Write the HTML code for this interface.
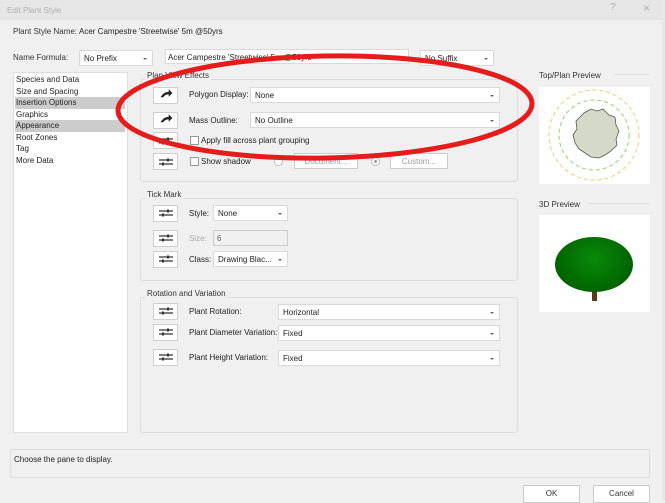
<!DOCTYPE html>
<html><head><style>
*{box-sizing:border-box;margin:0;padding:0}
body{width:665px;height:500px;background:#f0f0f0;font-family:"Liberation Sans",sans-serif;font-size:8px;color:#222;position:relative;overflow:hidden}
.a{position:absolute}
.dd{position:absolute;background:#fff;border:1px solid #d9d9d9;height:16px;padding:3px 4px;font-size:8px;color:#222}
.dd:after{content:"";position:absolute;right:5px;top:7px;border-left:2px solid transparent;border-right:2px solid transparent;border-top:2px solid #666}
.btn{position:absolute;width:25px;height:17px;background:#fff;border:1px solid #cfcfcf}
.grp{position:absolute;border:1px solid #dcdcdc;border-radius:3px}
.gl{position:absolute;background:#f0f0f0;padding:0 2px;font-size:8px;color:#333}
.pb{position:absolute;background:#fff;border:1px solid #ccc;font-size:8px;color:#999;text-align:center;padding-top:3px;height:16px}
</style></head><body>
<div class="a" style="left:0;top:0;width:665px;height:20px;background:#e6e6e6"></div>
<div class="a" style="left:7px;top:6px;color:#b0b0b0;font-size:8px">Edit Plant Style</div>
<div class="a" style="left:610px;top:2px;color:#b0b0b0;font-size:10px">?</div>
<div class="a" style="left:643px;top:1px;color:#b0b0b0;font-size:12px">×</div>
<div class="a" style="left:13px;top:27px;color:#333">Plant Style Name:</div>
<div class="a" style="left:79px;top:27px">Acer Campestre 'Streetwise' 5m @50yrs</div>
<div class="a" style="left:13px;top:53px;color:#333">Name Formula:</div>
<div class="dd" style="left:79px;top:50px;width:74px">No Prefix</div>
<div class="a" style="left:165px;top:49px;width:244px;height:15px;background:#fff;border:1px solid #d9d9d9;padding:3px 2px">Acer Campestre 'Streetwise' 5m @50yrs</div>
<div class="dd" style="left:420px;top:50px;width:74px">No Suffix</div>
<div class="a" style="left:13px;top:72px;width:115px;height:361px;background:#fff;border:1px solid #ddd"></div>
<div class="a" style="left:15px;top:74px;line-height:11.5px;width:110px">
<div style="padding-left:1px">Species and Data</div><div style="padding-left:1px">Size and Spacing</div>
<div style="padding-left:1px;background:#cccccc">Insertion Options</div><div style="padding-left:1px">Graphics</div>
<div style="padding-left:1px;background:#cccccc">Appearance</div><div style="padding-left:1px">Root Zones</div>
<div style="padding-left:1px">Tag</div><div style="padding-left:1px">More Data</div></div>

<div class="grp" style="left:140px;top:79px;width:378px;height:103px"></div>
<div class="gl" style="left:145px;top:71px">Plan View Effects</div>
<div class="btn" style="left:153px;top:87px"></div>
<div class="btn" style="left:153px;top:112px"></div>
<div class="btn" style="left:153px;top:132px"></div>
<div class="btn" style="left:153px;top:153px"></div>
<div class="a" style="left:189px;top:90px">Polygon Display:</div>
<div class="dd" style="left:250px;top:87px;width:250px">None</div>
<div class="a" style="left:189px;top:116px">Mass Outline:</div>
<div class="dd" style="left:250px;top:112px;width:250px">No Outline</div>
<div class="a" style="left:190px;top:136px;width:9px;height:9px;border:1px solid #999;background:#fff"></div>
<div class="a" style="left:201px;top:136px">Apply fill across plant grouping</div>
<div class="a" style="left:190px;top:157px;width:9px;height:9px;border:1px solid #999;background:#fff"></div>
<div class="a" style="left:201px;top:157px">Show shadow</div>
<div class="a" style="left:274px;top:157px;width:9px;height:9px;border:1px solid #bbb;border-radius:50%;background:#fff"></div>
<div class="pb" style="left:294px;top:153px;width:64px">Document...</div>
<div class="a" style="left:371px;top:157px;width:9px;height:9px;border:1px solid #bbb;border-radius:50%;background:#fff"><div style="width:3px;height:3px;background:#999;border-radius:50%;margin:2px"></div></div>
<div class="pb" style="left:390px;top:153px;width:58px">Custom...</div>

<div class="grp" style="left:140px;top:198px;width:378px;height:83px"></div>
<div class="gl" style="left:145px;top:190px">Tick Mark</div>
<div class="btn" style="left:153px;top:205px"></div>
<div class="btn" style="left:153px;top:230px"></div>
<div class="btn" style="left:153px;top:251px"></div>
<div class="a" style="left:189px;top:209px">Style:</div>
<div class="dd" style="left:213px;top:205px;width:75px">None</div>
<div class="a" style="left:189px;top:234px;color:#aaa">Size:</div>
<div class="a" style="left:213px;top:230px;width:75px;height:16px;border:1px solid #ccc;background:#f0f0f0;padding:3px 3px;color:#666">6</div>
<div class="a" style="left:189px;top:255px">Class:</div>
<div class="dd" style="left:213px;top:251px;width:75px">Drawing Blac...</div>

<div class="grp" style="left:140px;top:297px;width:378px;height:136px"></div>
<div class="gl" style="left:145px;top:289px">Rotation and Variation</div>
<div class="btn" style="left:153px;top:303px"></div>
<div class="btn" style="left:153px;top:324px"></div>
<div class="btn" style="left:153px;top:349px"></div>
<div class="a" style="left:189px;top:307px">Plant Rotation:</div>
<div class="dd" style="left:278px;top:304px;width:222px">Horizontal</div>
<div class="a" style="left:189px;top:328px">Plant Diameter Variation:</div>
<div class="dd" style="left:278px;top:325px;width:222px">Fixed</div>
<div class="a" style="left:189px;top:353px">Plant Height Variation:</div>
<div class="dd" style="left:278px;top:350px;width:222px">Fixed</div>

<div class="a" style="left:539px;top:71px;color:#333">Top/Plan Preview</div>
<div class="a" style="left:614px;top:74px;width:35px;height:1px;background:#ddd"></div>
<div class="a" style="left:539px;top:87px;width:111px;height:97px;background:#fff"></div>
<svg class="a" style="left:539px;top:87px" width="111" height="97">
<circle cx="55" cy="48" r="45" fill="none" stroke="#f7c873" stroke-width="1" stroke-dasharray="4 3"/>
<circle cx="55" cy="48" r="35" fill="none" stroke="#8ad86a" stroke-width="1" stroke-dasharray="4 3"/>
<path d="M45 26 L52 22 L58 24 L64 22 L70 28 L76 30 L77 38 L80 44 L77 52 L78 58 L72 64 L66 68 L60 71 L52 70 L46 66 L40 62 L36 56 L34 48 L38 42 L37 34 Z" fill="#d4dac7" stroke="#555" stroke-width="0.8"/>
</svg>
<div class="a" style="left:539px;top:200px;color:#333">3D Preview</div>
<div class="a" style="left:589px;top:203px;width:60px;height:1px;background:#ddd"></div>
<div class="a" style="left:539px;top:215px;width:111px;height:97px;background:#fff"></div>
<div class="a" style="left:592px;top:290px;width:5px;height:11px;background:#5a3a20"></div>
<div class="a" style="left:555px;top:237px;width:78px;height:55px;border-radius:50%;background:radial-gradient(ellipse at 50% 40%,#0a8a0a,#006400 70%,#003a00)"></div>

<svg class="a" style="left:0;top:0" width="665" height="500">
<g fill="#222" stroke="#222">
<path d="M161 97 q3-5 8-5 l0-2 l3 3 l-3 3 l0-2 q-4 0-6 3z" stroke-width="0.6"/>
<path d="M161 122 q3-5 8-5 l0-2 l3 3 l-3 3 l0-2 q-4 0-6 3z" stroke-width="0.6"/>
</g>
<g stroke="#333" stroke-width="1.2">
<path d="M159 139h14M159 143h14M159 160h14M159 164h14M159 211h14M159 215h14M159 236h14M159 240h14M159 257h14M159 261h14M159 309h14M159 313h14M159 330h14M159 334h14M159 355h14M159 359h14"/>
</g>
<g fill="#333">
<rect x="167" y="137.5" width="2" height="3"/><rect x="162" y="141.5" width="2" height="3"/>
<rect x="167" y="158.5" width="2" height="3"/><rect x="162" y="162.5" width="2" height="3"/>
<rect x="167" y="209.5" width="2" height="3"/><rect x="162" y="213.5" width="2" height="3"/>
<rect x="167" y="234.5" width="2" height="3"/><rect x="162" y="238.5" width="2" height="3"/>
<rect x="167" y="255.5" width="2" height="3"/><rect x="162" y="259.5" width="2" height="3"/>
<rect x="167" y="307.5" width="2" height="3"/><rect x="162" y="311.5" width="2" height="3"/>
<rect x="167" y="328.5" width="2" height="3"/><rect x="162" y="332.5" width="2" height="3"/>
<rect x="167" y="353.5" width="2" height="3"/><rect x="162" y="357.5" width="2" height="3"/>
</g>
<ellipse cx="325" cy="107" rx="207" ry="51" transform="rotate(-1 325 107)" fill="none" stroke="#e41c1c" stroke-width="5"/>
</svg>

<div class="a" style="left:10px;top:449px;width:640px;height:29px;border:1px solid #ddd;border-radius:2px"></div>
<div class="a" style="left:14px;top:455px">Choose the pane to display.</div>
<div class="pb" style="left:523px;top:485px;width:57px;color:#333;height:18px">OK</div>
<div class="pb" style="left:593px;top:485px;width:57px;color:#333;height:18px">Cancel</div>
<div class="a" style="left:662px;top:0;width:3px;height:500px;background:#e8e8e8"></div>
</body></html>
